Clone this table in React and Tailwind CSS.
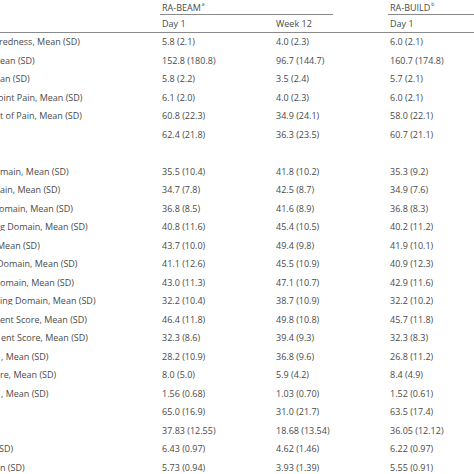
import React from "react";

const rows = [
  ["redness, Mean (SD)", "-ml-[1px]", "5.8 (2.1)", "4.0 (2.3)", "6.0 (2.1)"],
  ["ean (SD)", "ml-0", "152.8 (180.8)", "96.7 (144.7)", "160.7 (174.8)"],
  ["an (SD)", "ml-0", "5.8 (2.2)", "3.5 (2.4)", "5.7 (2.1)"],
  ["oint Pain, Mean (SD)", "-ml-[2px]", "6.1 (2.0)", "4.0 (2.3)", "6.0 (2.1)"],
  ["t of Pain, Mean (SD)", "ml-0", "60.8 (22.3)", "34.9 (24.1)", "58.0 (22.1)"],
  ["", "ml-0", "62.4 (21.8)", "36.3 (23.5)", "60.7 (21.1)"],
  ["", "ml-0", "", "", ""],
  ["main, Mean (SD)", "ml-0", "35.5 (10.4)", "41.8 (10.2)", "35.3 (9.2)"],
  ["ain, Mean (SD)", "ml-0", "34.7 (7.8)", "42.5 (8.7)", "34.9 (7.6)"],
  ["omain, Mean (SD)", "-ml-[1px]", "36.8 (8.5)", "41.6 (8.9)", "36.8 (8.3)"],
  ["g Domain, Mean (SD)", "ml-0", "40.8 (11.6)", "45.4 (10.5)", "40.2 (11.2)"],
  ["Mean (SD)", "-ml-[3px]", "43.7 (10.0)", "49.4 (9.8)", "41.9 (10.1)"],
  ["Domain, Mean (SD)", "-ml-[3px]", "41.1 (12.6)", "45.5 (10.9)", "40.9 (12.3)"],
  ["omain, Mean (SD)", "ml-0", "43.0 (11.3)", "47.1 (10.7)", "42.9 (11.6)"],
  ["ing Domain, Mean (SD)", "ml-0", "32.2 (10.4)", "38.7 (10.9)", "32.2 (10.2)"],
  ["ent Score, Mean (SD)", "ml-0", "46.4 (11.8)", "49.8 (10.8)", "45.7 (11.8)"],
  ["ent Score, Mean (SD)", "ml-[1px]", "32.3 (8.6)", "39.4 (9.3)", "32.3 (8.3)"],
  [", Mean (SD)", "ml-[1px]", "28.2 (10.9)", "36.8 (9.6)", "26.8 (11.2)"],
  ["re, Mean (SD)", "ml-0", "8.0 (5.0)", "5.9 (4.2)", "8.4 (4.9)"],
  [", Mean (SD)", "ml-[1px]", "1.56 (0.68)", "1.03 (0.70)", "1.52 (0.61)"],
  ["", "ml-0", "65.0 (16.9)", "31.0 (21.7)", "63.5 (17.4)"],
  ["", "ml-0", "37.83 (12.55)", "18.68 (13.54)", "36.05 (12.12)"],
  ["SD)", "-ml-[1px]", "6.43 (0.97)", "4.62 (1.46)", "6.22 (0.97)"],
  ["n (SD)", "ml-0", "5.73 (0.94)", "3.93 (1.39)", "5.55 (0.91)"],
];

export default function App() {
  return (
    <div
      className="w-[474px] h-[474px] overflow-hidden bg-white text-[#4a4a4a] text-[9px] leading-none"
      style={{ fontFamily: '"Open Sans", "Noto Sans", sans-serif' }}
    >
      {/* header row 1 */}
      <div className="flex h-[15px]">
        <div className="w-[160px] shrink-0" />
        <div className="w-[173px] shrink-0 border-b border-[#8a8a8a] flex items-center pl-[2px]">
          <span className="flex items-start">
            RA-BEAM<span className="text-[5px] leading-none -mt-[1px] ml-[1px]">a</span>
          </span>
        </div>
        <div className="w-[55px] shrink-0" />
        <div className="flex-1 border-b border-[#8a8a8a] flex items-center pl-[2px]">
          <span className="flex items-start">
            RA-BUILD<span className="text-[5px] leading-none -mt-[1px] ml-[1px]">b</span>
          </span>
        </div>
      </div>
      {/* header row 2 */}
      <div className="flex h-[17.5px] items-center border-b-[1.5px] border-[#8a8a8a]">
        <div className="w-[160px] shrink-0" />
        <div className="w-[114px] shrink-0 pl-[2px]">Day 1</div>
        <div className="w-[114px] shrink-0 pl-[2px]">Week 12</div>
        <div className="flex-1 pl-[2px]">Day 1</div>
      </div>
      {/* body */}
      <div className="flex flex-col">
        {rows.map((r, i) => (
          <div key={i} className="flex h-[18.5px] items-center">
            <div className="w-[160px] shrink-0 overflow-hidden whitespace-nowrap">
              <span className={"block " + r[1]}>{r[0]}</span>
            </div>
            <div className="w-[114px] shrink-0 pl-[2px] whitespace-nowrap">{r[2]}</div>
            <div className="w-[114px] shrink-0 pl-[2px] whitespace-nowrap">{r[3]}</div>
            <div className="flex-1 pl-[2px] whitespace-nowrap">{r[4]}</div>
          </div>
        ))}
      </div>
    </div>
  );
}
